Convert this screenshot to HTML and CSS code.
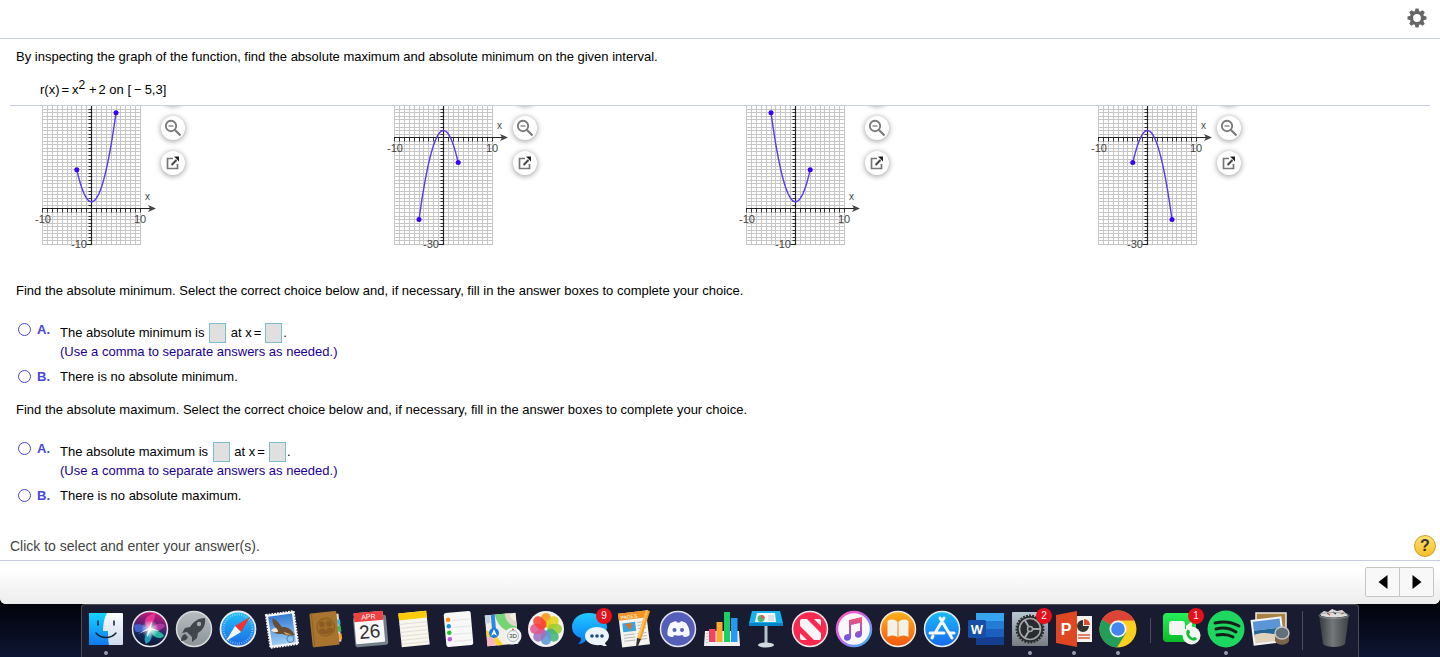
FILE: index.html
```html
<!DOCTYPE html>
<html lang="en">
<head>
    <meta charset="UTF-8">
    <meta name="viewport" content="width=device-width, initial-scale=1.0">
    <title>Absolute Maximum and Minimum</title>
    <link rel="stylesheet" href="styles.css">
</head>
<body>
    <!-- shared symbols -->
    <svg class="defs" width="0" height="0" aria-hidden="true">
        <symbol id="zoom-out" viewBox="0 0 24 24">
            <circle cx="10" cy="10" r="5.200" fill="none" stroke="#7b7b7b" stroke-width="1.900"/>
            <path d="M7.500 10h5" stroke="#7b7b7b" stroke-width="1.300"/>
            <path d="M14 14l5.500 5.500" stroke="#7b7b7b" stroke-width="2.200"/>
        </symbol>
        <symbol id="open-out" viewBox="0 0 24 24">
            <path d="M12 7.500H6.500v10h10V13" fill="none" stroke="#777" stroke-width="1.700"/>
            <path d="M10.500 14l5-5" stroke="#444" stroke-width="1.900"/>
            <path d="M13 5.500H18v5z" fill="#222"/>
        </symbol>
    </svg>

    <div class="window">
        <header class="topbar">
            <button class="gear" aria-label="Settings">
                <svg viewBox="0 0 20 20" width="20" height="20">
                    <g fill="#666">
                        <path id="tooth" d="M8.500 0.500h3l1 4h-5z"/>
                        <use href="#tooth" transform="rotate(45 10 10)"/>
                        <use href="#tooth" transform="rotate(90 10 10)"/>
                        <use href="#tooth" transform="rotate(135 10 10)"/>
                        <use href="#tooth" transform="rotate(180 10 10)"/>
                        <use href="#tooth" transform="rotate(225 10 10)"/>
                        <use href="#tooth" transform="rotate(270 10 10)"/>
                        <use href="#tooth" transform="rotate(315 10 10)"/>
                    </g>
                    <circle cx="10" cy="10" r="5.500" fill="none" stroke="#666" stroke-width="3.200"/>
                </svg>
            </button>
        </header>

        <main>
            <p class="prompt">By inspecting the graph of the function, find the absolute maximum and absolute minimum on the given interval.</p>
            <p class="equation">r(x)<span class="op">=</span>x<sup>2</sup> <span class="plus">+</span>2 on [<span class="minus">−</span>5,3]</p>

            <div class="graphs" id="graphs"></div>

            <fieldset class="question">
                <legend>Find the absolute minimum. Select the correct choice below and, if necessary, fill in the answer boxes to complete your choice.</legend>
                <div class="choice">
                    <input type="radio" name="min" id="min-a">
                    <label class="letter" for="min-a">A.</label>
                    <div class="answer">
                        The absolute minimum is <input class="box" type="text" aria-label="Minimum value"> at x<span class="eq">=</span><input class="box" type="text" aria-label="Minimum x">.
                        <div class="hint">(Use a comma to separate answers as needed.)</div>
                    </div>
                </div>
                <div class="choice choice-b">
                    <input type="radio" name="min" id="min-b">
                    <label class="letter" for="min-b">B.</label>
                    <div class="answer">There is no absolute minimum.</div>
                </div>
            </fieldset>

            <fieldset class="question question-max">
                <legend>Find the absolute maximum. Select the correct choice below and, if necessary, fill in the answer boxes to complete your choice.</legend>
                <div class="choice">
                    <input type="radio" name="max" id="max-a">
                    <label class="letter" for="max-a">A.</label>
                    <div class="answer">
                        The absolute maximum is <input class="box" type="text" aria-label="Maximum value"> at x<span class="eq">=</span><input class="box" type="text" aria-label="Maximum x">.
                        <div class="hint">(Use a comma to separate answers as needed.)</div>
                    </div>
                </div>
                <div class="choice choice-b">
                    <input type="radio" name="max" id="max-b">
                    <label class="letter" for="max-b">B.</label>
                    <div class="answer">There is no absolute maximum.</div>
                </div>
            </fieldset>
        </main>

        <div class="status">
            <span>Click to select and enter your answer(s).</span>
            <button class="help" aria-label="Help">?</button>
        </div>

        <footer class="pager">
            <button aria-label="Previous"><svg viewBox="0 0 10 14" width="10" height="14"><path d="M9.500 0v14L0.500 7z"/></svg></button>
            <button aria-label="Next"><svg viewBox="0 0 10 14" width="10" height="14"><path d="M0.500 0v14l9-7z"/></svg></button>
        </footer>
    </div>

    <nav class="dock" aria-label="Dock">
        <button class="app running" aria-label="Finder">
            <svg viewBox="0 0 44 44">
                <defs>
                    <linearGradient id="finderL" x2="0" y2="1"><stop stop-color="#12d4ff"/><stop offset="1" stop-color="#1278ee"/></linearGradient>
                    <linearGradient id="finderR" x2="0" y2="1"><stop stop-color="#fafcff"/><stop offset="1" stop-color="#cfdbed"/></linearGradient>
                </defs>
                <rect x="5" y="6" width="34" height="32" rx="1" fill="url(#finderR)"/>
                <path d="M5 6h18c-3 5-4 12-4 18h5c0 5 0 9 1 14H5z" fill="url(#finderL)"/>
                <path d="M14 14v4M30 14v4" stroke="#123" stroke-width="1.500" stroke-linecap="round"/>
                <path d="M12 26c5 6 15 6 20 0" fill="none" stroke="#123" stroke-width="1.400" stroke-linecap="round"/>
            </svg>
        </button>
        <button class="app" aria-label="Siri">
            <svg viewBox="0 0 44 44">
                <defs>
                    <linearGradient id="siri" x1="0.600" y1="0" x2="0.400" y2="1"><stop stop-color="#d01a78"/><stop offset=".35" stop-color="#6a1f74"/><stop offset=".6" stop-color="#1b2f66"/><stop offset="1" stop-color="#081329"/></linearGradient>
                    <radialGradient id="glow"><stop stop-color="#fff"/><stop offset=".3" stop-color="#fff" stop-opacity=".7"/><stop offset="1" stop-color="#fff" stop-opacity="0"/></radialGradient>
                </defs>
                <circle cx="22" cy="22" r="17.500" fill="url(#siri)" stroke="#e3e2e8" stroke-width="1.500"/>
                <path d="M6 18c7-2 12 1 16 5-5 0-12 4-15 1z" fill="#4b6ee0" fill-opacity=".8"/>
                <path d="M22 23C15 17 14 10 27 6c1 5-3 10-5 17z" fill="#fa399e" fill-opacity=".8"/>
                <path d="M22 23c5-7 10-8 15-5-2 6-9 6-15 5z" fill="#c23cad" fill-opacity=".8"/>
                <path d="M22 23c4-1 11 1 14 6-5 5-12 0-14-6z" fill="#25c7a6" fill-opacity=".9"/>
                <path d="M22 23c3 6 2 11-4 14-3-5-1-10 4-14z" fill="#24bfd6" fill-opacity=".8"/>
                <circle cx="22" cy="22" r="9" fill="url(#glow)"/>
                <path d="M10 27l11-6 3-7-1 7 9 3-9-1-4 7 1-7z" fill="#fff"/>
            </svg>
        </button>
        <button class="app" aria-label="Launchpad">
            <svg viewBox="0 0 44 44">
                <defs><linearGradient id="launch" x2="0" y2="1"><stop stop-color="#b6bdc2"/><stop offset="1" stop-color="#8b9499"/></linearGradient></defs>
                <circle cx="22" cy="22" r="17.500" fill="url(#launch)" stroke="#d3dada" stroke-width="1.500"/>
                <path d="M33 11c-7 0-12 4-15 9l-5 1-3 5 5-1 5 5 0 5 5-4 1-5c5-3 8-8 7-15z" fill="#40464b"/>
                <path d="M13 27c-3 1-4 4-4 7 3 0 6-1 7-4z" fill="#40464b"/>
                <circle cx="27" cy="17" r="2.200" fill="#a4acb1"/>
            </svg>
        </button>
        <button class="app" aria-label="Safari">
            <svg viewBox="0 0 44 44">
                <defs><linearGradient id="safari" x2="0" y2="1"><stop stop-color="#22c1fb"/><stop offset="1" stop-color="#1a68e4"/></linearGradient></defs>
                <circle cx="22" cy="22" r="17.500" fill="url(#safari)" stroke="#e7ebef" stroke-width="1.800"/>
                <circle cx="22" cy="22" r="14.500" fill="none" stroke="#b6e2fa" stroke-width="2" stroke-dasharray=".6 1.700"/>
                <path d="M34 10L19 19l6 6z" fill="#f33131"/>
                <path d="M10 34l9-15 6 6z" fill="#f4f4f4"/>
            </svg>
        </button>
        <button class="app" aria-label="Mail">
            <svg viewBox="0 0 44 44">
                <defs><linearGradient id="mail" x2="0" y2="1"><stop stop-color="#347bd2"/><stop offset="1" stop-color="#9ccdf4"/></linearGradient></defs>
                <g transform="rotate(-8 22 22)">
                    <rect x="8" y="6" width="28" height="33" fill="#f5f5f5" stroke="#f5f5f5" stroke-width="2" stroke-dasharray="1.800 1"/>
                    <rect x="10" y="8" width="24" height="29" fill="url(#mail)"/>
                    <path d="M14 10c4 2 6 6 8 10 4 0 8 2 10 6l2 4c-5 0-9-1-12-3-5-1-8-1-10-5 2-1 4-1 5-1-3-3-4-7-3-11z" fill="#6b4c30"/>
                    <path d="M11 22c2-2 4-2 6-1l1 3c-3 1-5 0-7-2z" fill="#eee6d6"/>
                    <path d="M23 25l8 4-6-1z" fill="#d6b15f"/>
                    <circle cx="29" cy="33" r="3.500" fill="none" stroke="#4d7198" stroke-width=".8"/>
                </g>
            </svg>
        </button>
        <button class="app" aria-label="Contacts">
            <svg viewBox="0 0 44 44">
                <g transform="rotate(-6 22 22)">
                    <path d="M33 8h3v28h-3z" fill="#ddd"/>
                    <path d="M34 14h3v5h-3z" fill="#3dafe2"/><path d="M34 20h3v6h-3z" fill="#36bd62"/><path d="M34 28h3v6h-3z" fill="#efa735"/>
                    <rect x="7" y="5" width="27" height="34" rx="1.500" fill="#a9752e"/>
                    <path d="M9 5v34" stroke="#916324"/>
                    <circle cx="22" cy="20" r="9" fill="#a06d2a" stroke="#8d5f22"/>
                    <circle cx="18.500" cy="17" r="2.800" fill="#8b5d24"/><circle cx="25.500" cy="17" r="2.800" fill="#8b5d24"/>
                    <path d="M14.500 24c1-4 6-4 7.500 0 1.500-4 6.500-4 7.500 0-3 4-12 4-15 0z" fill="#8b5d24"/>
                </g>
            </svg>
        </button>
        <button class="app" aria-label="Calendar">
            <svg viewBox="0 0 44 44">
                <g transform="rotate(-5 22 22)">
                    <rect x="6" y="9" width="33" height="30" rx="2" fill="#75818a"/>
                    <rect x="7" y="5" width="29" height="31" rx="1" fill="#f8f8f8"/>
                    <path d="M7 5h29v9H7z" fill="#ec4141"/>
                    <text x="21.500" y="12" font-size="7" fill="#fff" text-anchor="middle">APR</text>
                    <text x="21.500" y="31" font-size="19" fill="#333" text-anchor="middle">26</text>
                </g>
            </svg>
        </button>
        <button class="app" aria-label="Notes">
            <svg viewBox="0 0 44 44">
                <g transform="rotate(-6 22 22)">
                    <rect x="8" y="5" width="28" height="34" fill="#f8f6ed"/>
                    <path d="M8 5h28v7H8z" fill="#fccb0b"/>
                    <path d="M8 16h28M8 20h28M8 24h28M8 28h28M8 32h28M8 36h28" stroke="#d7d5cf" stroke-width=".7"/>
                </g>
            </svg>
        </button>
        <button class="app" aria-label="Reminders">
            <svg viewBox="0 0 44 44">
                <g transform="rotate(-5 22 22)">
                    <rect x="9" y="5" width="27" height="34" rx="2" fill="#f8f8f8"/>
                    <path d="M17 13h18M17 20h18M17 27h18M17 34h18" stroke="#ddd" stroke-width=".7"/>
                    <circle cx="13" cy="12" r="2.300" fill="#ff8a18"/><circle cx="13" cy="18.500" r="2.300" fill="#1592ed"/>
                    <circle cx="13" cy="25" r="2.300" fill="#1dc928"/><circle cx="13" cy="31.500" r="2.300" fill="#c35be8"/>
                </g>
            </svg>
        </button>
        <button class="app" aria-label="Maps">
            <svg viewBox="0 0 44 44">
                <g transform="rotate(-5 22 22)">
                    <rect x="6" y="7" width="31" height="31" fill="#f2eee4"/>
                    <path d="M16 7h12c0 6 3 10 9 12v8c-12-1-19-8-21-20z" fill="#76d474"/>
                    <path d="M26 7h5c0 5 2 7 6 9v5c-7-2-11-7-11-14z" fill="#e2d7cc"/>
                    <path d="M6 22l8 4 8 12h-6L6 27z" fill="#ffd12b"/>
                    <path d="M12 7h4v20h-4z" fill="#2887ef"/>
                    <path d="M6 7h5v8H6z" fill="#cacfe0"/>
                    <path d="M6 29h8v9H6z" fill="#f9b8bd"/>
                </g>
                <circle cx="14" cy="26" r="5" fill="#187be6"/>
                <path d="M14 22l3 7-3-2-3 2z" fill="#fff"/>
                <circle cx="33" cy="29" r="8.500" fill="#f2f4f4"/>
                <circle cx="33" cy="29" r="5.500" fill="none" stroke="#9ca7ac" stroke-width=".8"/>
                <text x="33" y="31" font-size="6" fill="#333" text-anchor="middle">3D</text>
                <path d="M32 23l1-2 1 2z" fill="#e22"/>
            </svg>
        </button>
        <button class="app" aria-label="Photos">
            <svg viewBox="0 0 44 44">
                <circle cx="22" cy="22" r="18" fill="#f3f3f0"/>
                <g fill-opacity=".88">
                    <rect x="17" y="6" width="10" height="14.500" rx="5" fill="#ff9510"/>
                    <rect x="17" y="6" width="10" height="14.500" rx="5" fill="#dfd51c" transform="rotate(45 22 22)"/>
                    <rect x="17" y="6" width="10" height="14.500" rx="5" fill="#9ccc30" transform="rotate(90 22 22)"/>
                    <rect x="17" y="6" width="10" height="14.500" rx="5" fill="#43b57a" transform="rotate(135 22 22)"/>
                    <rect x="17" y="6" width="10" height="14.500" rx="5" fill="#5c9ad5" transform="rotate(180 22 22)"/>
                    <rect x="17" y="6" width="10" height="14.500" rx="5" fill="#9a72c3" transform="rotate(225 22 22)"/>
                    <rect x="17" y="6" width="10" height="14.500" rx="5" fill="#e2558f" transform="rotate(270 22 22)"/>
                    <rect x="17" y="6" width="10" height="14.500" rx="5" fill="#fb4136" transform="rotate(315 22 22)"/>
                </g>
            </svg>
        </button>
        <button class="app" aria-label="Messages, 9 unread">
            <svg viewBox="0 0 44 44">
                <defs><linearGradient id="msg" x2="0" y2="1"><stop stop-color="#22c8ff"/><stop offset="1" stop-color="#087cf5"/></linearGradient></defs>
                <path d="M21 6c10 0 18 6 18 14s-8 13-18 13l-3 0c-2 3-5 4-8 4 2-2 3-3 3-6-6-2-9-6-9-11C4 12 11 6 21 6z" fill="url(#msg)"/>
                <path d="M29 20c7 0 12 4 12 9 0 3-2 5-4 7 0 1 1 2 2 3-2 0-4 0-6-1-9 1-16-3-16-9 0-5 5-9 12-9z" fill="#ecf5fe"/>
                <g fill="#244a82"><circle cx="24" cy="29" r="1.800"/><circle cx="29" cy="29" r="1.800"/><circle cx="34" cy="29" r="1.800"/></g>
            </svg>
            <span class="badge">9</span>
        </button>
        <button class="app" aria-label="Pages">
            <svg viewBox="0 0 44 44">
                <g transform="rotate(-7 22 22)">
                    <rect x="8" y="5" width="28" height="34" fill="#f4f3ef"/>
                    <path d="M8 5h28v7H8z" fill="#f79320"/>
                    <text x="10" y="11" font-size="5" fill="#fff">PAGES</text>
                    <rect x="11" y="15" width="13" height="9" fill="#3aa5d8"/>
                    <path d="M14 16h7l-3 7z" fill="#e06e29"/>
                    <path d="M26 16h8M26 19h8M26 22h8M11 27h11M11 30h11M11 33h11M25 27h9M25 30h9M25 33h9" stroke="#b9b9b9"/>
                </g>
                <path d="M34 3l4 1-9 29-4-1z" fill="#f5a129"/><path d="M34 3l2 .5-9 29-2-.5z" fill="#ffc35a"/>
                <path d="M25 31l4 1-3 7-2 1z" fill="#333"/>
            </svg>
        </button>
        <button class="app" aria-label="Discord">
            <svg viewBox="0 0 44 44">
                <circle cx="22" cy="22" r="17.500" fill="#555fb9" stroke="#e3e2ee" stroke-width="1.500"/>
                <path d="M15 16c2-1 4-2 5-2l1 1.500h3l1-1.500c1 0 3 1 5 2 3 4 4 8 3.500 12-2 2-4 2-5.500 2l-1.500-2c-3 1-5 1-8 0l-1.500 2c-1.500 0-3.500 0-5.500-2-.5-4 .5-8 3-12z" fill="#f7f7ff"/>
                <circle cx="18.500" cy="23" r="2" fill="#555fb9"/><circle cx="26" cy="23" r="2" fill="#555fb9"/>
            </svg>
        </button>
        <button class="app" aria-label="Numbers">
            <svg viewBox="0 0 44 44">
                <path d="M5 24h34l1 15H4z" fill="#f1f1f1"/>
                <path d="M7 26v11" stroke="#bbb" stroke-width="1.500" stroke-dasharray="1 2"/>
                <rect x="9" y="22" width="6.500" height="13" fill="#f34263"/>
                <rect x="16.500" y="15" width="6" height="20" fill="#fba82d"/>
                <rect x="24" y="5" width="6" height="30" fill="#1dce62"/>
                <rect x="31" y="11" width="6.500" height="24" fill="#2599f1"/>
            </svg>
        </button>
        <button class="app" aria-label="Keynote">
            <svg viewBox="0 0 44 44">
                <path d="M20.500 18h3v21h-3z" fill="#b6c3cb"/>
                <ellipse cx="22" cy="38" rx="8" ry="2.500" fill="#d0dbe0"/>
                <path d="M8 4h28l3 12H5z" fill="#1ab2ec"/><path d="M5 16h34v3H5z" fill="#0785c5"/>
                <path d="M13 6h18l1 9H11z" fill="#f4f8fa"/>
                <circle cx="17" cy="11.500" r="3.500" fill="#46bd71"/><path d="M17 11.500V8a4 4 0 0 1 4 3.500z" fill="#ef5454"/>
                <path d="M24 9h6M24 11h6M24 13h6" stroke="#bac1c6" stroke-width=".8"/>
            </svg>
        </button>
        <button class="app" aria-label="News">
            <svg viewBox="0 0 44 44">
                <circle cx="22" cy="22" r="17.500" fill="#fb2950" stroke="#eee7ea" stroke-width="1.500"/>
                <path d="M14 12h5l14 14v5q0 2-2 2h-5L12 19v-5q0-2 2-2zM26 12h5q2 0 2 2v5zM12 26v5q0 2 2 2h5z" fill="#f7f5f6"/>
            </svg>
        </button>
        <button class="app" aria-label="iTunes">
            <svg viewBox="0 0 44 44">
                <defs>
                    <linearGradient id="ring" x2="1" y2="1"><stop stop-color="#ff5ba7"/><stop offset=".45" stop-color="#ca63ed"/><stop offset="1" stop-color="#25bff3"/></linearGradient>
                    <linearGradient id="note" x2="0" y2="1"><stop stop-color="#fb526f"/><stop offset="1" stop-color="#6557ee"/></linearGradient>
                </defs>
                <circle cx="22" cy="22" r="17" fill="#f8f7fa" stroke="url(#ring)" stroke-width="2.500"/>
                <path d="M17 13l13-3v17c0 5-8 5-7 0 1-3 3-3 5-3v-8l-9 2v12c0 5-8 5-7 0 1-3 3-3 5-3z" fill="url(#note)"/>
            </svg>
        </button>
        <button class="app" aria-label="Books">
            <svg viewBox="0 0 44 44">
                <defs><linearGradient id="books" x2="0" y2="1"><stop stop-color="#ffb21b"/><stop offset="1" stop-color="#f2560f"/></linearGradient></defs>
                <circle cx="22" cy="22" r="17.500" fill="url(#books)" stroke="#f3ece3" stroke-width="1.500"/>
                <path d="M21.500 15c-3-3-7-3-10-1v16c4-2 7-2 10 0zM22.500 15c3-3 7-3 10-1v16c-4-2-7-2-10 0z" fill="#f6f1e8"/>
            </svg>
        </button>
        <button class="app" aria-label="App Store">
            <svg viewBox="0 0 44 44">
                <defs><linearGradient id="store" x2="0" y2="1"><stop stop-color="#19bbfb"/><stop offset="1" stop-color="#1768ee"/></linearGradient></defs>
                <circle cx="22" cy="22" r="17.500" fill="url(#store)" stroke="#e4ebf0" stroke-width="1.500"/>
                <path d="M20 11l12 20M24 11L15 26M12 31l1-2M10 26h14M29 26h5" fill="none" stroke="#f6f8fb" stroke-width="3" stroke-linecap="round"/>
            </svg>
        </button>
        <button class="app" aria-label="Word">
            <svg viewBox="0 0 44 44">
                <path d="M12 6h28v8H12z" fill="#35a5ed"/><path d="M12 14h28v8H12z" fill="#257bd4"/>
                <path d="M12 22h28v8H12z" fill="#1c5ebd"/><path d="M12 30h28v8H12z" fill="#143f91"/>
                <rect x="4" y="13" width="18" height="18" rx="1.500" fill="#174ea6"/>
                <text x="13" y="26.500" font-size="13" font-weight="bold" fill="#fff" text-anchor="middle">W</text>
            </svg>
        </button>
        <button class="app running" aria-label="System Preferences, 2 updates">
            <svg viewBox="0 0 44 44">
                <defs><linearGradient id="prefs" x2="0" y2="1"><stop stop-color="#b9c9d3"/><stop offset="1" stop-color="#777c81"/></linearGradient></defs>
                <rect x="4" y="5" width="36" height="34" rx="1" fill="url(#prefs)"/>
                <circle cx="22" cy="22" r="13" fill="#292b2e" stroke="#292b2e" stroke-width="3" stroke-dasharray="1.800 1.200"/>
                <circle cx="22" cy="22" r="10.500" fill="none" stroke="#a3a6a9" stroke-width="1.600"/>
                <circle cx="22" cy="22" r="2.500" fill="none" stroke="#a3a6a9" stroke-width="1.500"/>
                <path d="M25 22h8M20.500 19.500l-4-7M20.500 24.500l-4 7" stroke="#a3a6a9" stroke-width="2"/>
            </svg>
            <span class="badge">2</span>
        </button>
        <button class="app running" aria-label="PowerPoint">
            <svg viewBox="0 0 44 44">
                <rect x="22" y="9" width="18" height="26" fill="#f5f1ef"/>
                <path d="M31 13v6h6a6 6 0 1 1-6-6z" fill="#333"/><path d="M32 12a6 6 0 0 1 6 6h-6z" fill="#df4d2c"/>
                <path d="M26 28h12M26 31h12" stroke="#dd5a3b" stroke-width="1.500"/>
                <path d="M4 8l21-4v36L4 36z" fill="#df4622"/>
                <text x="14" y="28" font-size="16" font-weight="bold" fill="#fff" text-anchor="middle">P</text>
            </svg>
        </button>
        <button class="app running" aria-label="Chrome">
            <svg viewBox="0 0 44 44">
                <circle cx="22" cy="22" r="18.500" fill="#fbcf1d"/>
                <path d="M22 22L6 12.700A18.500 18.500 0 0 0 21 40.500L30 26z" fill="#239d58"/>
                <path d="M22 22L6 12.700A18.500 18.500 0 0 1 38.500 13.500H22z" fill="#dc4437"/>
                <path d="M6 12.700L15 27l7-5z" fill="#239d58"/>
                <circle cx="22" cy="22" r="8.500" fill="#f5f5f5"/><circle cx="22" cy="22" r="6.800" fill="#4585ee"/>
            </svg>
        </button>
        <span class="divider"></span>
        <button class="app" aria-label="FaceTime, 1 missed call">
            <svg viewBox="0 0 44 44">
                <defs><linearGradient id="face" x2="0" y2="1"><stop stop-color="#25f159"/><stop offset="1" stop-color="#0bbb29"/></linearGradient></defs>
                <rect x="3" y="6" width="33" height="29" rx="4" fill="url(#face)"/>
                <rect x="9" y="14" width="16" height="14" rx="3" fill="#f2f5f1"/><path d="M26 19l6-5v14l-6-5z" fill="#f2f5f1"/>
                <circle cx="31.500" cy="28.500" r="9" fill="#f3f5f2"/>
                <path d="M27 23c2-1 3 1 3 3l-1 1c1 2 2 3 4 4l1-1c2 0 4 2 2 3-5 3-12-5-9-10z" fill="#15bd36"/>
            </svg>
            <span class="badge">1</span>
        </button>
        <button class="app running" aria-label="Spotify">
            <svg viewBox="0 0 44 44">
                <circle cx="22" cy="22" r="18.500" fill="#1ed760"/>
                <path d="M11 16c8-2 17-1 24 3M12 22c7-2 14-1 20 3M13 28c6-1 11-1 16 2" fill="none" stroke="#15201b" stroke-width="3" stroke-linecap="round"/>
            </svg>
        </button>
        <button class="app" aria-label="Preview">
            <svg viewBox="0 0 44 44">
                <rect x="8" y="6" width="30" height="22" fill="#a98143" stroke="#eeeae1" stroke-width="1.500"/>
                <g transform="rotate(-7 20 24)">
                    <rect x="4" y="11" width="31" height="26" fill="#f5f5f5"/>
                    <rect x="6" y="13" width="27" height="9" fill="#5b95d6"/>
                    <rect x="6" y="22" width="27" height="6" fill="#246597"/>
                    <path d="M6 26c9-2 19 1 27 5v4H6z" fill="#dfd2ba"/>
                </g>
                <path d="M27 26h14v8c-2 5-12 5-14 0z" fill="#7d6349"/>
                <ellipse cx="34" cy="26" rx="7" ry="6" fill="#62707c" stroke="#c3c4c3" stroke-width="1.500"/>
            </svg>
        </button>
        <span class="divider divider-tall"></span>
        <button class="app" aria-label="Trash">
            <svg viewBox="0 0 44 44">
                <defs><linearGradient id="trash" x2="1" y2="0"><stop stop-color="#35393c"/><stop offset=".45" stop-color="#74787a"/><stop offset="1" stop-color="#3e4144"/></linearGradient></defs>
                <path d="M8 7l4-3 4 1 4-3 5 2 5-1 6 5-3 4H11z" fill="#deddd9"/>
                <path d="M15 6l3 2M29 7l3-1" stroke="#b64d43" stroke-width="1.300"/>
                <path d="M21 5l3 2" stroke="#333" stroke-width="1.300"/>
                <path d="M7 8c6 3 24 3 30 0l-4 29c-4 4-18 4-22 0z" fill="url(#trash)"/>
                <ellipse cx="22" cy="8.500" rx="15" ry="3" fill="none" stroke="#8f9294" stroke-width=".8"/>
            </svg>
        </button>
    </nav>

    <script src="graphs.js"></script>
</body>
</html>
```
FILE: styles.css
```css
* {
    box-sizing: border-box;
}
body {
    margin: 0;
    min-height: 100vh;
    display: flex;
    flex-direction: column;
    font-family: "Liberation Sans", Arial, Helvetica, sans-serif;
    font-size: 13px;
    line-height: 20px;
    color: #000;
    background: linear-gradient(to bottom, #02030a 0, #02030a calc(100% - 53px), #0c1533 100%);
}
button {
    font-family: inherit;
    padding: 0;
    border: none;
    background: none;
    cursor: pointer;
}
.defs {
    position: absolute;
}
.window {
    flex: 1;
    display: flex;
    flex-direction: column;
    background: #fff;
    border-radius: 0 0 6px 6px;
    overflow: hidden;
}
.topbar {
    height: 39px;
    padding: 0 13px;
    display: flex;
    align-items: center;
    justify-content: flex-end;
    border-bottom: 1px solid #c9cede;
}
.gear {
    display: flex;
    margin-bottom: 2px;
}
main {
    flex: 1;
}
.prompt {
    margin: 8px 16px 13px;
}
.equation {
    margin: 0 40px 5px;
}
.equation sup {
    font-size: 12px;
    line-height: 0;
    vertical-align: 5px;
}
.op {
    margin: 0 3px 0 2px;
}
.plus {
    margin-right: 2px;
}
.minus {
    margin: 0 3px;
}

/* graphs */
.graphs {
    display: grid;
    grid-template-columns: repeat(4, 1fr);
    margin: 0 10px;
    padding: 0 7px 0 5px;
    border-top: 1px solid #c9cede;
    overflow: hidden;
}
.graph {
    display: flex;
    height: 144px;
}
.plot {
    flex: none;
    width: 146px;
    height: 144px;
}
.plot text {
    font-size: 11px;
    fill: #444;
}
.plot .axis-name {
    font-size: 10px;
}
.tools {
    display: flex;
    flex-direction: column;
    gap: 11px;
    margin-top: -25px;
}
.tools button {
    width: 24px;
    height: 24px;
    border-radius: 50%;
    background: #fff;
    box-shadow: 0 1px 5px 1px rgba(0, 0, 0, 0.3);
}
.tools svg {
    display: block;
    width: 24px;
    height: 24px;
}

/* questions */
.question {
    border: none;
    margin: 31px 16px 0;
    padding: 0;
}
.question-max {
    margin-top: 13px;
}
.question legend {
    padding: 0;
    margin-bottom: 22px;
}
.choice {
    display: flex;
    align-items: flex-start;
}
.choice-b {
    margin-top: 5px;
}
.choice input[type="radio"] {
    appearance: none;
    flex: none;
    width: 13px;
    height: 13px;
    margin: 0 6px 0 2px;
    border: 1px solid #4646d8;
    border-radius: 50%;
    background: #fff;
}
.choice input[type="radio"]:checked {
    background: #4646d8;
}
.choice .letter {
    width: 23px;
    margin-top: -3px;
    font-weight: bold;
    color: #4646d8;
}
.choice-b input[type="radio"] {
    margin-top: 3px;
}
.choice-b .letter {
    margin-top: 0;
}
.box {
    width: 17px;
    height: 20px;
    padding: 0;
    border: 1px solid #7dbccb;
    background: #e0e0e0;
    vertical-align: middle;
    margin: -1px 1px 0;
}
.eq {
    margin: 0 3px 0 2px;
}
.hint {
    margin-top: -1px;
    color: #1a0092;
}
.status {
    display: flex;
    justify-content: space-between;
    align-items: center;
    height: 28px;
    padding: 0 4px 0 10px;
    font-size: 14px;
    color: #444;
}
.help {
    width: 22px;
    height: 22px;
    border: 1px solid #c9a02c;
    border-radius: 50%;
    background: linear-gradient(#ffe271, #f8bd28);
    font-size: 16px;
    font-weight: bold;
    line-height: 20px;
    color: #333;
}
.pager {
    display: flex;
    justify-content: flex-end;
    height: 44px;
    padding: 6px 6px 7px;
    border-top: 1px solid #c9cede;
    background: linear-gradient(#fff 20%, #ececec);
}
.pager button {
    width: 35px;
    display: flex;
    align-items: center;
    justify-content: center;
    border: 1px solid #c6c6c6;
    background: #f8f8f8;
}
.pager button:first-child {
    border-radius: 2px 0 0 2px;
}
.pager button:last-child {
    margin-left: -1px;
    border-radius: 0 2px 2px 0;
}

/* dock */
.dock {
    display: flex;
    align-self: center;
    height: 53px;
    padding: 2px 2px 0;
    background: #191b30;
    border: 1px solid #4b4c57;
    border-bottom: none;
    border-radius: 4px 4px 0 0;
}
.app {
    position: relative;
    width: 44px;
    height: 44px;
}
.app > svg {
    display: block;
    width: 44px;
    height: 44px;
}
.running::after {
    content: "";
    position: absolute;
    left: 20px;
    bottom: -4px;
    width: 4px;
    height: 4px;
    border-radius: 50%;
    background: #9b9ba8;
}
.badge {
    position: absolute;
    top: 1px;
    right: 0;
    width: 16px;
    height: 16px;
    border-radius: 50%;
    background: #e5101a;
    color: #fff;
    font-size: 10px;
    line-height: 16px;
    text-align: center;
}
.divider {
    width: 1px;
    height: 25px;
    margin: 11px 9px 0 10px;
    background: #4b4c5c;
}
.divider-tall {
    height: 39px;
    margin-top: 4px;
}
```
FILE: graphs.js
```js
// each choice: a sign for the parabola, its interval and where the x axis sits
const choices = [
    { sign: 1, from: -3, to: 5, bottom: -10 },
    { sign: -1, from: -5, to: 3, bottom: -30 },
    { sign: 1, from: -5, to: 3, bottom: -10 },
    { sign: -1, from: -3, to: 5, bottom: -30 }
];

const left = 27;
const right = 125;
const base = 138;
const unitX = (right - left) / 20;
const unitY = 3.56;

function px(x) {
    return left + (x + 10) * unitX;
}

function drawGraph(c) {
    const py = y => base - (y - c.bottom) * unitY;
    const f = x => c.sign * x * x + 2;
    const zero = Math.round(py(0)) + 0.5;
    const mid = Math.round(px(0)) + 0.5;

    let grid = '';
    let ticks = '';
    for (let i = 0; i <= 20; i++) {
        const x = Math.round(left + i * unitX) + 0.5;
        grid += `M${x} 0V${base + 1}`;
        ticks += `M${x} ${zero}v4`;
    }
    for (let y = base; y > 0; y -= unitY) {
        const row = Math.round(y) + 0.5;
        grid += `M${left} ${row}H${right + 1}`;
        ticks += `M${mid - 3} ${row}h3`;
    }

    const points = [];
    for (let x = c.from; x <= c.to; x += 0.25) {
        points.push(`${px(x) + 0.5},${py(f(x)) + 0.5}`);
    }

    return `
        <svg class="plot" viewBox="0 0 146 144" role="img" aria-label="Graph of a parabola">
            <path d="${grid}" stroke="#c6c6c6" fill="none"/>
            <path d="${ticks}" stroke="#333" fill="none"/>
            <path d="M${left} ${zero}H137M${mid} 0V${base + 1}M${mid - 5} ${base + 0.5}h5" stroke="#222" stroke-width="1.2" fill="none"/>
            <path d="M141 ${zero}l-8 -3.5l2 3.5l-2 3.5z" fill="#444"/>
            <text x="20" y="${zero + 14}">-10</text>
            <text x="119" y="${zero + 14}">10</text>
            <text x="72" y="${base + 4}" text-anchor="end">${c.bottom}</text>
            <text class="axis-name" x="130" y="${zero - 9}">x</text>
            <polyline points="${points.join(' ')}" fill="none" stroke="#5a35f5" stroke-width="1.4"/>
            <circle cx="${px(c.from) + 0.5}" cy="${py(f(c.from)) + 0.5}" r="2.5" fill="#3a00ff"/>
            <circle cx="${px(c.to) + 0.5}" cy="${py(f(c.to)) + 0.5}" r="2.5" fill="#3a00ff"/>
        </svg>`;
}

document.getElementById('graphs').innerHTML = choices.map(c => `
    <div class="graph">
        ${drawGraph(c)}
        <div class="tools">
            <button aria-label="Zoom in"></button>
            <button aria-label="Zoom out"><svg><use href="#zoom-out"/></svg></button>
            <button aria-label="Open graph"><svg><use href="#open-out"/></svg></button>
        </div>
    </div>`).join('');
```
